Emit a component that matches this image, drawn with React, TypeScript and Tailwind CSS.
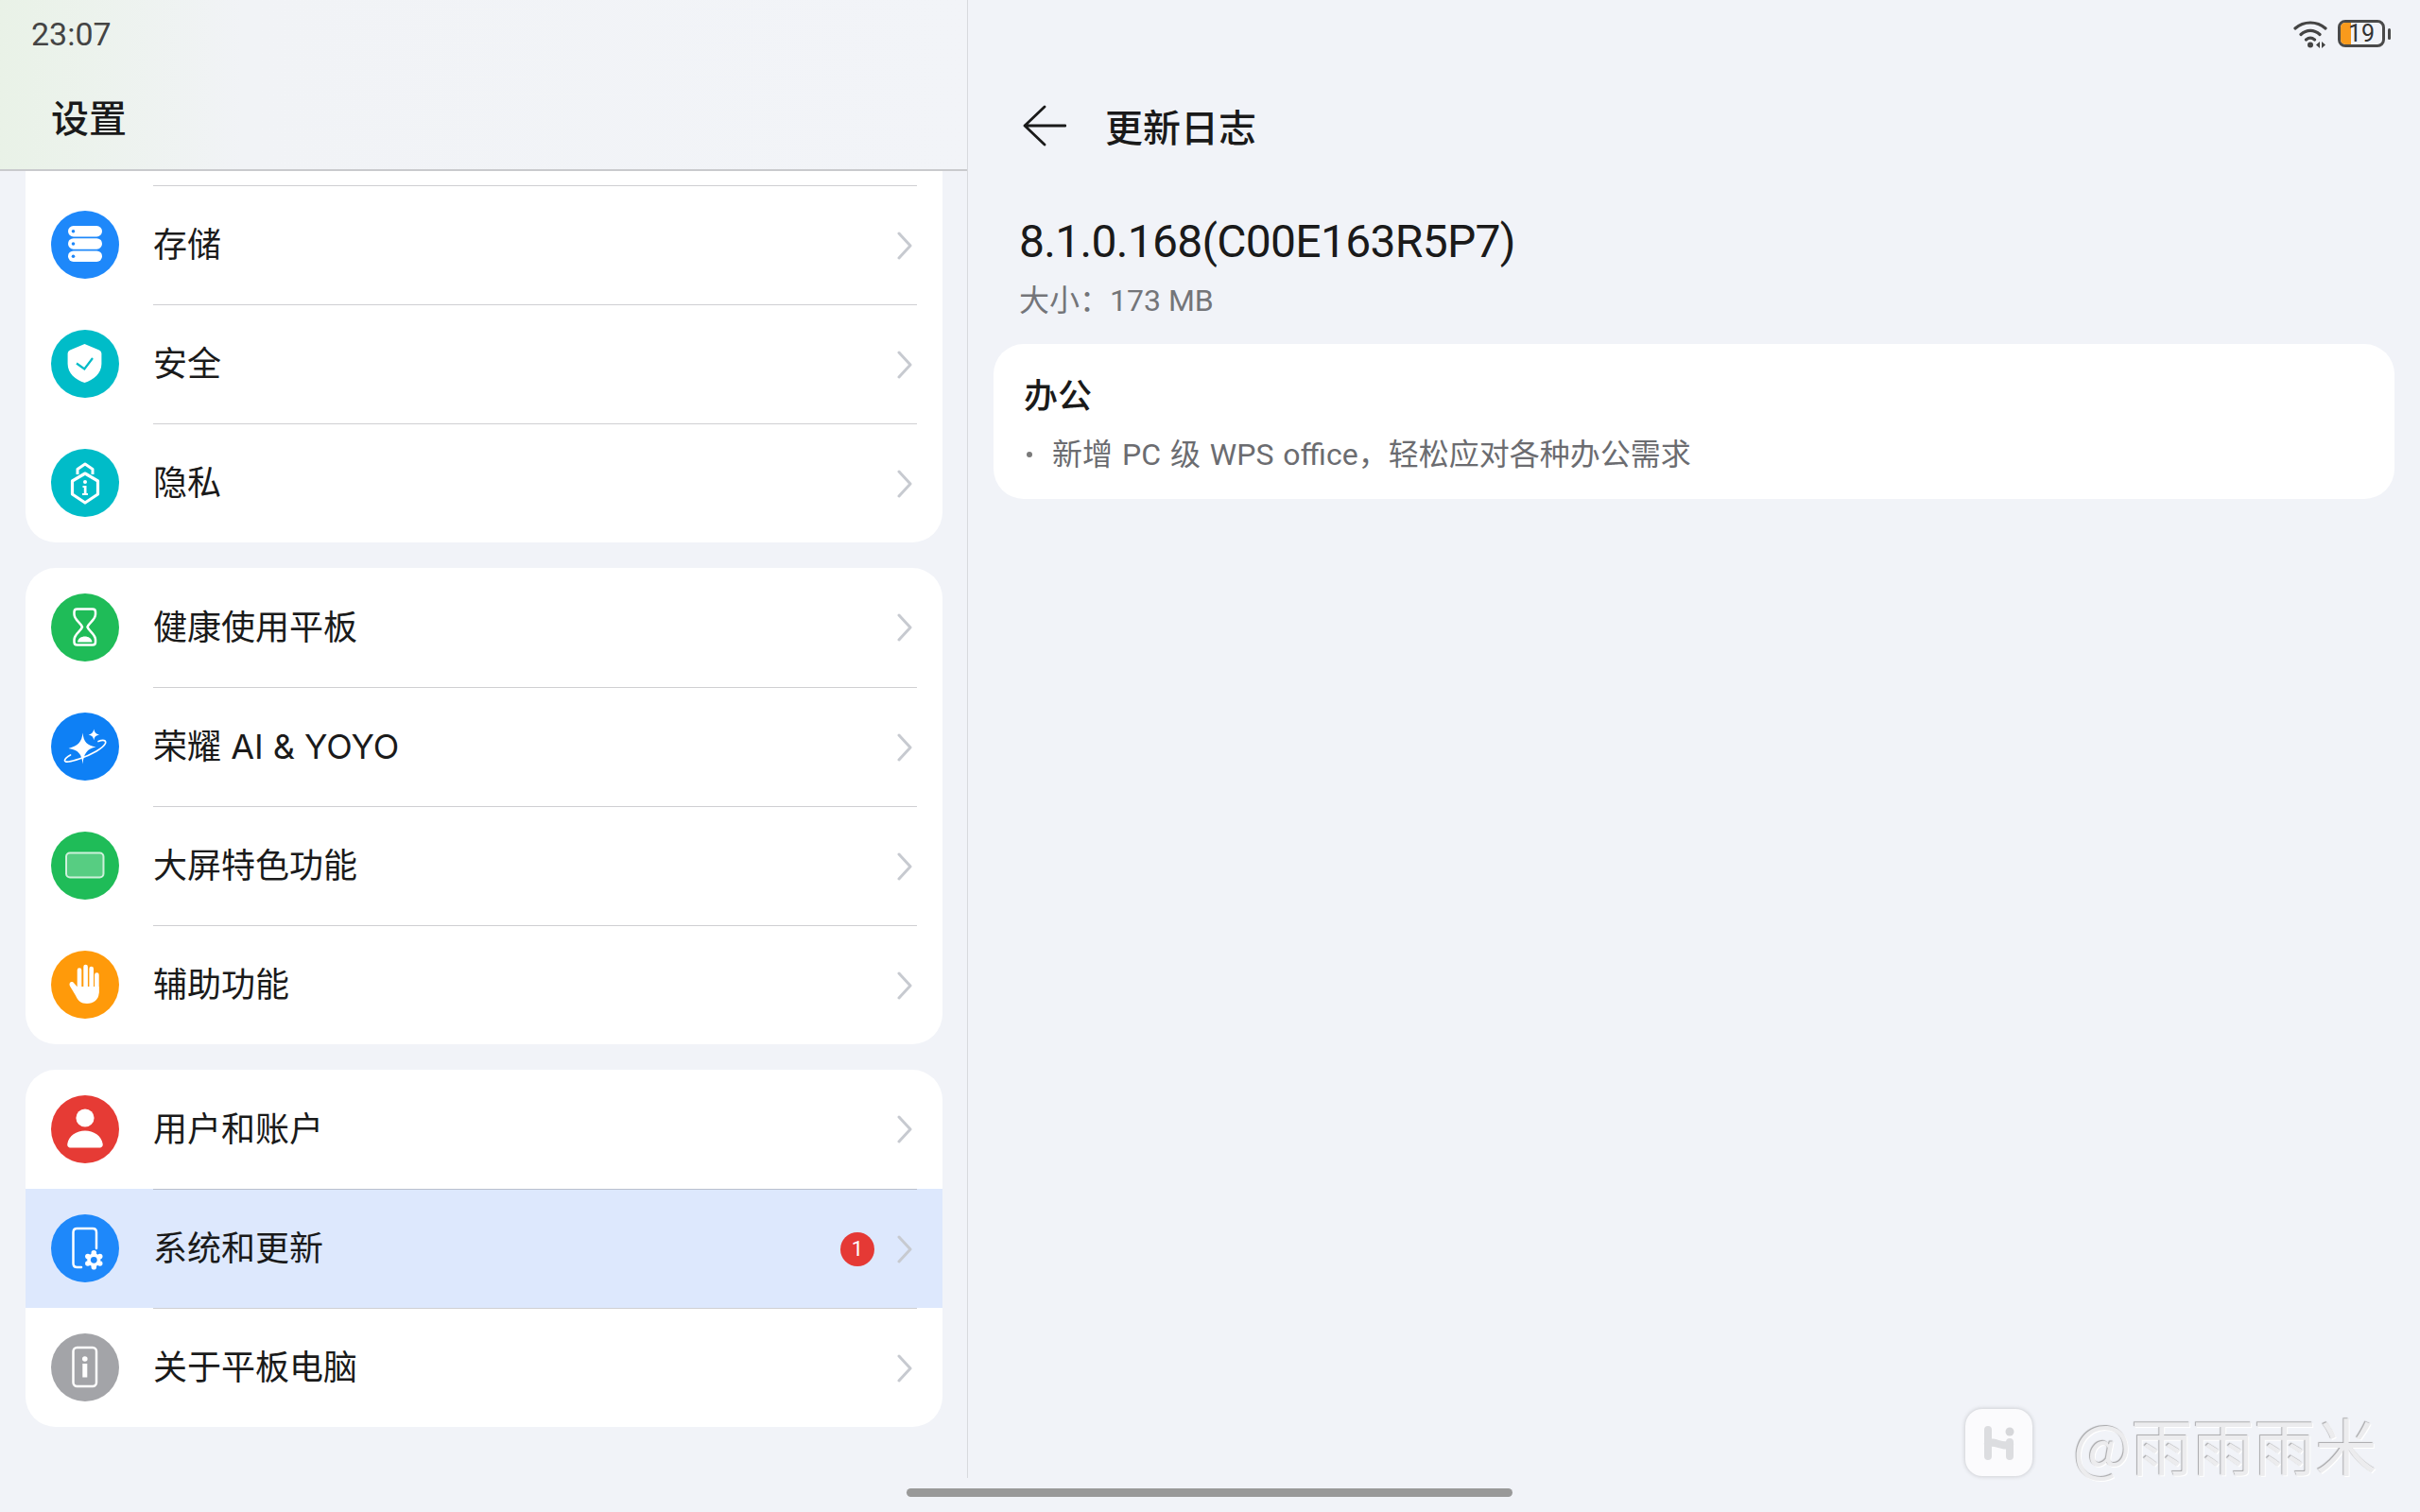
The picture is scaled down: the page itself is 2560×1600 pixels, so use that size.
import type { ReactNode } from "react";

const cjk = "font-['Noto_Sans_CJK_SC','Noto_Sans',sans-serif]";

const gearLobes = [90, 30, -30, -90, -150, 150];

// little white drawings on the round setting icons, all in a 72x72 box
const icons: Record<string, ReactNode> = {
  storage: (
    <>
      <rect x="18" y="16" width="36" height="11.5" rx="5.7" fill="#fff" />
      <rect x="18" y="29.2" width="36" height="11.5" rx="5.7" fill="#fff" />
      <rect x="18" y="42.4" width="36" height="11.5" rx="5.7" fill="#fff" />
      <circle cx="23.5" cy="21.7" r="1.8" fill="#1e88fa" />
      <circle cx="23.5" cy="35" r="1.8" fill="#1e88fa" />
      <circle cx="23.5" cy="48.2" r="1.8" fill="#1e88fa" />
    </>
  ),
  shield: (
    <>
      <path d="M35.5 15 L51 21.5 Q53.4 22.5 53.4 25 V36 C53.4 46 45 53 35.5 56 C26 53 17.6 46 17.6 36 V25 Q17.6 22.5 20 21.5 Z" fill="#fff" />
      <path d="M27 35.5 L35.3 41.5 L44 30" fill="none" stroke="#00bcc8" strokeWidth="2.2" />
    </>
  ),
  privacy: (
    <>
      <path d="M28 27 V21.5 L36 16 L44 21.5 V27" fill="none" stroke="#fff" strokeWidth="3" strokeLinejoin="round" />
      <path d="M36 26 L49.5 34 V48 L36 57 L22.5 48 V34 Z" fill="none" stroke="#fff" strokeWidth="3.2" strokeLinejoin="round" />
      <circle cx="36" cy="35" r="2" fill="#fff" />
      <path d="M33.5 39 H37.5 V47 H39 V49 H33 V47 H34.8 V41 H33.5 Z" fill="#fff" />
    </>
  ),
  hourglass: (
    <>
      <path d="M27.5 16.5 H44 Q47 16.5 47 19.5 V22 C47 28 40 31 38.5 35.5 C40 40 47 43 47 49 V51.5 Q47 54.5 44 54.5 H27.5 Q24.5 54.5 24.5 51.5 V49 C24.5 43 31.5 40 33 35.5 C31.5 31 24.5 28 24.5 22 V19.5 Q24.5 16.5 27.5 16.5 Z" fill="none" stroke="#fff" strokeWidth="2.5" />
      <path d="M28 51.5 C28.5 47.5 32 45.5 35.8 45.5 C39.5 45.5 43 47.5 43.5 51.5 Z" fill="#fff" />
    </>
  ),
  planet: (
    <>
      <path d="M33.5 21.5 C34.5 31 38 35 47.5 36.5 C38 38 34.5 44 33.5 54.5 C32.5 44 29 39.5 18.5 38 C29 35 32.5 31 33.5 21.5 Z" fill="#fff" />
      <path d="M45.3 17.5 C45.8 21 47.5 22.8 51 23.4 C47.5 24 45.8 25.7 45.3 29.3 C44.8 25.7 43 24 39.7 23.4 C43 22.8 44.8 21 45.3 17.5 Z" fill="#fff" />
      <path d="M50 30.5 C55.5 28.5 58.5 29.5 57.5 32.5 C55.5 37.5 43 44.5 30 49 C21 52 14 53.5 14.5 50.5 C15 48.5 17.5 46.5 20.5 45" fill="none" stroke="#fff" strokeWidth="1.7" strokeLinecap="round" />
    </>
  ),
  screen: <rect x="16" y="22.5" width="39.5" height="26" rx="4" fill="#ffffff" fillOpacity="0.25" stroke="#fff" strokeOpacity="0.75" strokeWidth="2" />,
  hand: (
    <>
      <path d="M30 42 V20.5 M36.6 40 V17 M42.7 42 V19 M48.4 44 V25.5" stroke="#fff" strokeWidth="4.6" strokeLinecap="round" />
      <path d="M27.5 38 H50.6 V45 C50.6 51.5 45 56 38 56 C31.5 56 28.2 52.5 26 47.5 L20 37.5 C18.5 34.5 21 32 23.5 33.5 L27.5 38 Z" fill="#fff" />
    </>
  ),
  user: (
    <>
      <circle cx="36" cy="24" r="9.6" fill="#fff" />
      <path d="M21 55.5 C18 55.5 17 53.5 17.3 51.5 C18.5 43 27 37.5 36 37.5 C45 37.5 53.5 43 54.7 51.5 C55 53.5 54 55.5 51 55.5 Z" fill="#fff" />
    </>
  ),
  system: (
    <>
      <path d="M32 56 H27.5 Q23.5 56 23.5 52 V19 Q23.5 15 27.5 15 H44 Q48 15 48 19 V36" fill="none" stroke="#fff" strokeWidth="2.5" strokeLinecap="round" />
      <circle cx="45.3" cy="48.3" r="7" fill="#fff" />
      {gearLobes.map((deg) => (
        <circle
          key={deg}
          cx={45.3 + 7.4 * Math.cos((deg * Math.PI) / 180)}
          cy={48.3 + 7.4 * Math.sin((deg * Math.PI) / 180)}
          r="2.8"
          fill="#fff"
        />
      ))}
      <circle cx="45.3" cy="48.3" r="3.4" fill="#1e88fa" />
    </>
  ),
  about: (
    <>
      <rect x="23.5" y="15" width="24.5" height="41" rx="4" fill="none" stroke="#fff" strokeWidth="2.5" />
      <circle cx="35.8" cy="27" r="2.8" fill="#fff" />
      <rect x="33.3" y="32" width="5" height="14.5" fill="#fff" />
    </>
  ),
};

function Chevron() {
  return (
    <svg width="16" height="30" viewBox="0 0 16 30" className="shrink-0">
      <path d="M2 2 L14 15 L2 28" fill="none" stroke="#c7cad0" strokeWidth="3" strokeLinecap="round" strokeLinejoin="round" />
    </svg>
  );
}

function Row({ icon, color, label, line = true, active = false, badge = false }: { icon: string; color: string; label: string; line?: boolean; active?: boolean; badge?: boolean }) {
  return (
    <div className={`flex h-[126px] items-center pl-[27px] ${active ? "bg-[#dde8fd]" : ""}`}>
      <svg width="72" height="72" viewBox="0 0 72 72" className="shrink-0">
        <circle cx="36" cy="36" r="36" fill={color} />
        {icons[icon]}
      </svg>
      <div className={`ml-[36px] mr-[27px] flex h-full flex-1 items-center pr-[5px] ${line ? (active ? "border-t border-[#b9c0ce]" : "border-t border-[#cfcfd2]") : ""}`}>
        <span className="flex-1 pb-[1px] font-['Inter','Noto_Sans_CJK_SC',sans-serif] text-[36px] leading-[48px] text-[#1a1a1a]">{label}</span>
        {badge && (
          <span className="mr-[24px] flex h-[36px] w-[36px] items-center justify-center rounded-full bg-[#e53935] font-['Roboto',sans-serif] text-[22px] leading-none text-white">1</span>
        )}
        <Chevron />
      </div>
    </div>
  );
}

export default function App() {
  return (
    <div className={`relative flex h-[1600px] w-[2560px] overflow-hidden bg-[#f1f3f8] ${cjk}`}>
      {/* settings list */}
      <aside className="h-[1564px] w-[1024px] shrink-0 border-r border-[#d8dade]">
        <header className="flex h-[181px] flex-col border-b-2 border-[#c9cacd] bg-gradient-to-r from-[#e9f2e7] via-[#f1f3f6] via-25% to-[#f2f4f8] pl-[33px]">
          <div className="mt-[16px] font-['Roboto',sans-serif] text-[34px] leading-[40px] text-[#444]">23:07</div>
          <h1 className="ml-[21px] mt-[39px] text-[40px] font-medium leading-[56px] text-[#1a1a1a]">设置</h1>
        </header>

        <div className="pl-[27px] pr-[26px]">
          <section className="overflow-hidden rounded-b-[32px] bg-white pt-[15px]">
            <Row icon="storage" color="#1e88fa" label="存储" />
            <Row icon="shield" color="#00bcc8" label="安全" />
            <Row icon="privacy" color="#00bcc8" label="隐私" />
          </section>

          <section className="mt-[27px] overflow-hidden rounded-[32px] bg-white">
            <Row icon="hourglass" color="#1fbc58" label="健康使用平板" line={false} />
            <Row icon="planet" color="#0e80f5" label="荣耀 AI & YOYO" />
            <Row icon="screen" color="#1fbc58" label="大屏特色功能" />
            <Row icon="hand" color="#ff9a0a" label="辅助功能" />
          </section>

          <section className="mt-[27px] overflow-hidden rounded-[32px] bg-white">
            <Row icon="user" color="#e63b35" label="用户和账户" line={false} />
            <Row icon="system" color="#1e88fa" label="系统和更新" active badge />
            <Row icon="about" color="#a3a4a8" label="关于平板电脑" />
          </section>
        </div>
      </aside>

      {/* update log */}
      <main className="flex-1">
        <div className="flex h-[91px] items-start justify-end gap-[11px] pr-[31px] pt-[21px]">
          <svg width="36" height="30" viewBox="0 0 36 30">
            <path d="M2 9 C11 1 25 1 34 9 M8 15.5 C14 10 22 10 28 15.5 M13.5 21 C16.5 18.5 19.5 18.5 22.5 21" fill="none" stroke="#444" strokeWidth="3.2" strokeLinecap="round" />
            <circle cx="18" cy="26.5" r="3" fill="#444" />
            <path d="M24 26.5 L28 23 V30 Z M30 23 L34 26.5 L30 30 Z" fill="#444" />
          </svg>
          <div className="flex items-center gap-[3px]">
            <div className="relative flex h-[29px] w-[50px] items-center justify-center overflow-hidden rounded-[8px] border-[3px] border-[#4a4a4a]">
              <div className="absolute inset-y-0 left-0 w-[11px] bg-[#f99a1c]" />
              <span className="relative font-['Roboto',sans-serif] text-[25px] leading-none text-[#333]">19</span>
            </div>
            <div className="h-[12px] w-[3px] rounded-full bg-[#4a4a4a]" />
          </div>
        </div>

        <div className="flex h-[84px] items-center pl-[58px]">
          <svg width="46" height="44" viewBox="0 0 46 44" className="shrink-0">
            <path d="M23 2 L2 22 L23 42 M2 22 H45" fill="none" stroke="#1a1a1a" strokeWidth="2.8" strokeLinecap="round" strokeLinejoin="round" />
          </svg>
          <h2 className="ml-[41px] text-[40px] font-medium leading-[56px] text-[#1a1a1a]">更新日志</h2>
        </div>

        <div className="mt-[51px] pl-[54px] font-['Roboto','Noto_Sans_CJK_SC',sans-serif] text-[48px] leading-[60px] tracking-[-0.7px] text-[#1a1a1a]">8.1.0.168(C00E163R5P7)</div>
        <div className="mt-[10px] flex pl-[54px] font-['Roboto','Noto_Sans_CJK_SC',sans-serif] text-[32px] leading-[44px] text-[#747579]">大小：173 MB</div>

        <section className="ml-[27px] mr-[27px] mt-[24px] h-[164px] rounded-[32px] bg-white pl-[32px] pt-[28px]">
          <h3 className="text-[36px] font-medium leading-[48px] text-[#1a1a1a]">办公</h3>
          <div className="mt-[19px] flex items-center text-[32px] leading-[44px] text-[#6b6c70]">
            <span className="ml-[3px] mr-[21px] h-[6px] w-[6px] rounded-full bg-[#7a7a7a]" />
            <span className="font-['Roboto','Noto_Sans_CJK_SC',sans-serif] [word-spacing:2px]">新增 PC 级 WPS office，轻松应对各种办公需求</span>
          </div>
        </section>
      </main>

      {/* watermark */}
      <div className="absolute left-[2079px] top-[1491px] flex h-[71px] w-[71px] items-center justify-center rounded-[18px] bg-[#fbfbfd] shadow-[0_0_5px_rgba(0,0,0,0.2)]">
        <svg width="34" height="36" viewBox="0 0 34 36">
          <path d="M5 4 V32 M5 19 C12 14 20 24 28 19 M28 17 V32" fill="none" stroke="#dcdde0" strokeWidth="8" strokeLinecap="round" />
          <circle cx="28" cy="6" r="4.5" fill="#d6d7da" />
        </svg>
      </div>
      <div className="absolute left-[2193px] top-[1484px] text-[65px] leading-[88px] text-[#ececee] [text-shadow:-1px_-1px_1px_#a8a8aa,1px_1px_0_#ffffff]">@雨雨雨米</div>

      {/* home bar */}
      <div className="absolute bottom-[16px] left-[959px] h-[9px] w-[641px] rounded-[5px] bg-[#999]" />
    </div>
  );
}
